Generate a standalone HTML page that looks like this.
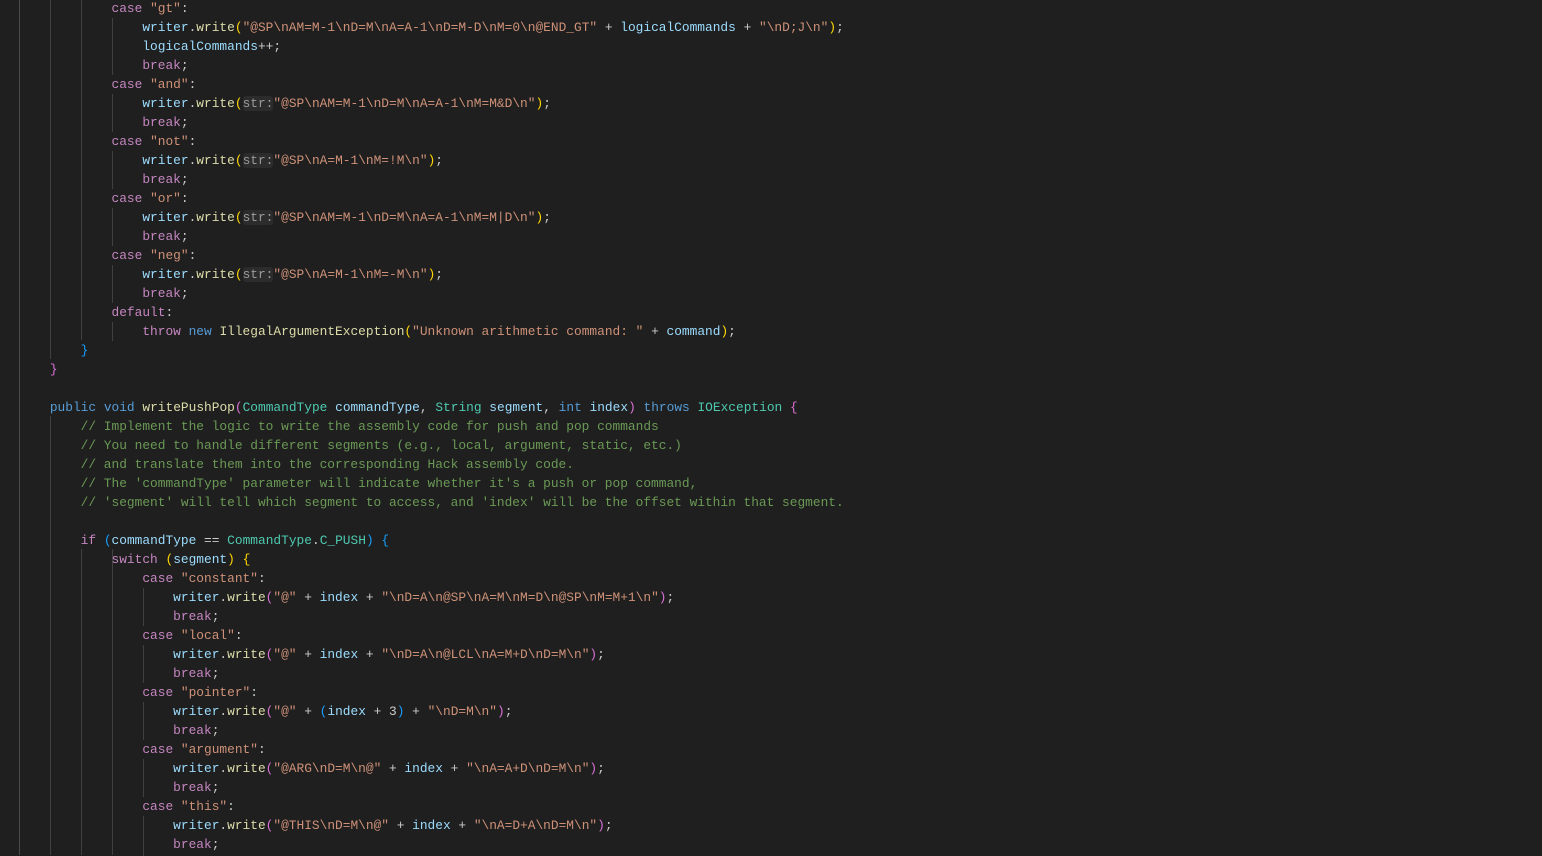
<!DOCTYPE html>
<html><head><meta charset="utf-8"><style>
html,body{margin:0;padding:0;background:#1f1f1f;width:1542px;height:855px;overflow:hidden}
pre{position:absolute;left:19px;top:-1.5px;margin:0;font-family:"Liberation Mono",monospace;font-size:12.85px;line-height:19px;color:#cccccc;white-space:pre}
.k{color:#c586c0}.b{color:#569cd6}.f{color:#dcdcaa}.t{color:#4ec9b0}.v{color:#9cdcfe}.s{color:#ce9178}.c{color:#6a9955}
.y{color:#ffd700}.p{color:#da70d6}.u{color:#179fff}
.h{color:#9a9a9a;background:#2c2c2c;border-radius:3px}
.g{position:absolute;width:1px;background:#404040}
</style></head><body>
<div class="g" style="left:19px;top:0;height:855px;background:#4a4a4a"></div>
<div class="g" style="left:50px;top:0;height:359px"></div>
<div class="g" style="left:50px;top:416px;height:439px"></div>
<div class="g" style="left:81px;top:0;height:340px"></div>
<div class="g" style="left:81px;top:549px;height:306px"></div>
<div class="g" style="left:112px;top:549px;height:306px"></div>
<div class="g" style="left:112px;top:17.5px;height:57px"></div>
<div class="g" style="left:112px;top:93.5px;height:38px"></div>
<div class="g" style="left:112px;top:150.5px;height:38px"></div>
<div class="g" style="left:112px;top:207.5px;height:38px"></div>
<div class="g" style="left:112px;top:264.5px;height:38px"></div>
<div class="g" style="left:112px;top:321.5px;height:19px"></div>
<div class="g" style="left:143px;top:587.5px;height:38px"></div>
<div class="g" style="left:143px;top:644.5px;height:38px"></div>
<div class="g" style="left:143px;top:701.5px;height:38px"></div>
<div class="g" style="left:143px;top:758.5px;height:38px"></div>
<div class="g" style="left:143px;top:815.5px;height:40px"></div>
<pre>            <span class="k">case</span> <span class="s">"gt"</span>:
                <span class="v">writer</span>.<span class="f">write</span><span class="y">(</span><span class="s">"@SP\nAM=M-1\nD=M\nA=A-1\nD=M-D\nM=0\n@END_GT"</span> + <span class="v">logicalCommands</span> + <span class="s">"\nD;J\n"</span><span class="y">)</span>;
                <span class="v">logicalCommands</span>++;
                <span class="k">break</span>;
            <span class="k">case</span> <span class="s">"and"</span>:
                <span class="v">writer</span>.<span class="f">write</span><span class="y">(</span><span class="h">str:</span><span class="s">"@SP\nAM=M-1\nD=M\nA=A-1\nM=M&amp;D\n"</span><span class="y">)</span>;
                <span class="k">break</span>;
            <span class="k">case</span> <span class="s">"not"</span>:
                <span class="v">writer</span>.<span class="f">write</span><span class="y">(</span><span class="h">str:</span><span class="s">"@SP\nA=M-1\nM=!M\n"</span><span class="y">)</span>;
                <span class="k">break</span>;
            <span class="k">case</span> <span class="s">"or"</span>:
                <span class="v">writer</span>.<span class="f">write</span><span class="y">(</span><span class="h">str:</span><span class="s">"@SP\nAM=M-1\nD=M\nA=A-1\nM=M|D\n"</span><span class="y">)</span>;
                <span class="k">break</span>;
            <span class="k">case</span> <span class="s">"neg"</span>:
                <span class="v">writer</span>.<span class="f">write</span><span class="y">(</span><span class="h">str:</span><span class="s">"@SP\nA=M-1\nM=-M\n"</span><span class="y">)</span>;
                <span class="k">break</span>;
            <span class="k">default</span>:
                <span class="k">throw</span> <span class="b">new</span> <span class="f">IllegalArgumentException</span><span class="y">(</span><span class="s">"Unknown arithmetic command: "</span> + <span class="v">command</span><span class="y">)</span>;
        <span class="u">}</span>
    <span class="p">}</span>

    <span class="b">public</span> <span class="b">void</span> <span class="f">writePushPop</span><span class="p">(</span><span class="t">CommandType</span> <span class="v">commandType</span>, <span class="t">String</span> <span class="v">segment</span>, <span class="b">int</span> <span class="v">index</span><span class="p">)</span> <span class="b">throws</span> <span class="t">IOException</span> <span class="p">{</span>
        <span class="c">// Implement the logic to write the assembly code for push and pop commands</span>
        <span class="c">// You need to handle different segments (e.g., local, argument, static, etc.)</span>
        <span class="c">// and translate them into the corresponding Hack assembly code.</span>
        <span class="c">// The 'commandType' parameter will indicate whether it's a push or pop command,</span>
        <span class="c">// 'segment' will tell which segment to access, and 'index' will be the offset within that segment.</span>

        <span class="k">if</span> <span class="u">(</span><span class="v">commandType</span> == <span class="t">CommandType</span>.<span class="t">C_PUSH</span><span class="u">)</span> <span class="u">{</span>
            <span class="k">switch</span> <span class="y">(</span><span class="v">segment</span><span class="y">)</span> <span class="y">{</span>
                <span class="k">case</span> <span class="s">"constant"</span>:
                    <span class="v">writer</span>.<span class="f">write</span><span class="p">(</span><span class="s">"@"</span> + <span class="v">index</span> + <span class="s">"\nD=A\n@SP\nA=M\nM=D\n@SP\nM=M+1\n"</span><span class="p">)</span>;
                    <span class="k">break</span>;
                <span class="k">case</span> <span class="s">"local"</span>:
                    <span class="v">writer</span>.<span class="f">write</span><span class="p">(</span><span class="s">"@"</span> + <span class="v">index</span> + <span class="s">"\nD=A\n@LCL\nA=M+D\nD=M\n"</span><span class="p">)</span>;
                    <span class="k">break</span>;
                <span class="k">case</span> <span class="s">"pointer"</span>:
                    <span class="v">writer</span>.<span class="f">write</span><span class="p">(</span><span class="s">"@"</span> + <span class="u">(</span><span class="v">index</span> + 3<span class="u">)</span> + <span class="s">"\nD=M\n"</span><span class="p">)</span>;
                    <span class="k">break</span>;
                <span class="k">case</span> <span class="s">"argument"</span>:
                    <span class="v">writer</span>.<span class="f">write</span><span class="p">(</span><span class="s">"@ARG\nD=M\n@"</span> + <span class="v">index</span> + <span class="s">"\nA=A+D\nD=M\n"</span><span class="p">)</span>;
                    <span class="k">break</span>;
                <span class="k">case</span> <span class="s">"this"</span>:
                    <span class="v">writer</span>.<span class="f">write</span><span class="p">(</span><span class="s">"@THIS\nD=M\n@"</span> + <span class="v">index</span> + <span class="s">"\nA=D+A\nD=M\n"</span><span class="p">)</span>;
                    <span class="k">break</span>;
</pre>
</body></html>
